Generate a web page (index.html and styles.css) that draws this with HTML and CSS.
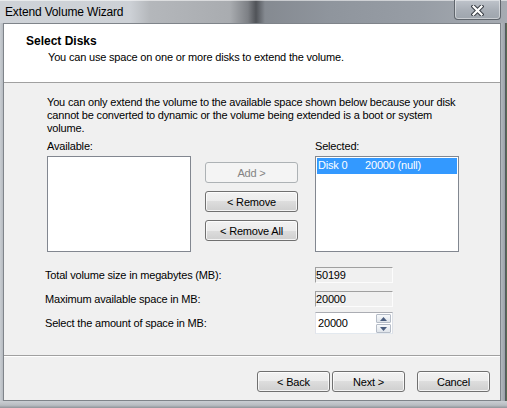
FILE: index.html
```html
<!DOCTYPE html>
<html>
<head>
<meta charset="utf-8">
<title>Extend Volume Wizard</title>
<link rel="stylesheet" href="styles.css">
</head>
<body>
<div class="window">
  <div class="titlebar">
    <span class="title">Extend Volume Wizard</span>
    <div class="close">
      <svg width="13" height="11" viewBox="0 0 13 11">
        <path d="M2.5 1.5 L10.5 9.5 M10.5 1.5 L2.5 9.5" stroke="#3a3f46" stroke-width="4.2" stroke-linecap="square" fill="none"/>
        <path d="M2.5 1.5 L10.5 9.5 M10.5 1.5 L2.5 9.5" stroke="#ffffff" stroke-width="2.2" stroke-linecap="square" fill="none"/>
      </svg>
    </div>
  </div>
  <div class="frame-mid">
    <div class="frame-left"></div>
    <div class="client">
      <div class="header">
        <div class="h-title">Select Disks</div>
        <div class="h-sub">You can use space on one or more disks to extend the volume.</div>
      </div>
      <div class="content">
        <p class="note">You can only extend the volume to the available space shown below because your disk<br>cannot be converted to dynamic or the volume being extended is a boot or system<br>volume.</p>
        <div class="lists">
          <div class="col-list">
            <div class="lbl">Available:</div>
            <div class="listbox"></div>
          </div>
          <div class="col-btns">
            <button class="btn disabled">Add &gt;</button>
            <button class="btn">&lt; Remove</button>
            <button class="btn">&lt; Remove All</button>
          </div>
          <div class="col-list col-sel">
            <div class="lbl">Selected:</div>
            <div class="listbox">
              <div class="item selected"><span class="c1">Disk 0</span><span class="c2">20000 (null)</span></div>
            </div>
          </div>
        </div>
        <div class="fields">
          <div class="flabel">Total volume size in megabytes (MB):</div>
          <div class="rofield">50199</div>
          <div class="flabel">Maximum available space in MB:</div>
          <div class="rofield">20000</div>
          <div class="flabel">Select the amount of space in MB:</div>
          <div class="spin">
            <span class="spin-val">20000</span>
            <div class="spin-btns">
              <div class="sbtn"><svg width="7" height="4" viewBox="0 0 7 4"><path d="M0 4 L3.5 0 L7 4 Z" fill="#4a5d7e"/></svg></div>
              <div class="sbtn"><svg width="7" height="4" viewBox="0 0 7 4"><path d="M0 0 L3.5 4 L7 0 Z" fill="#4a5d7e"/></svg></div>
            </div>
          </div>
        </div>
      </div>
      <div class="footer">
        <button class="btn wbtn">&lt; Back</button>
        <button class="btn wbtn next">Next &gt;</button>
        <button class="btn wbtn cancel">Cancel</button>
      </div>
    </div>
    <div class="frame-right"></div>
  </div>
  <div class="frame-bottom"></div>
</div>
</body>
</html>
```
FILE: styles.css
```css
* { box-sizing: border-box; }
html, body { margin: 0; padding: 0; }
body {
  width: 507px;
  height: 408px;
  overflow: hidden;
  font-family: "Liberation Sans", Arial, sans-serif;
  font-size: 11px;
  letter-spacing: -0.18px;
  color: #000;
  background: #a9aeb4;
}
.window {
  width: 507px;
  height: 408px;
  display: flex;
  flex-direction: column;
}
.titlebar {
  height: 23px;
  flex: none;
  display: flex;
  justify-content: space-between;
  align-items: flex-start;
  background: linear-gradient(to right, #cfd3d8 0px, #cdd1d6 130px, #b4b7bb 150px, #a9acb0 230px, #7d8085 248px, #505358 256px, #858a91 265px, #8f959d 330px, #979da5 420px, #a6abb2 507px);
  box-shadow: inset 0 1px 0 rgba(255,255,255,0.55);
}
.title {
  font-size: 12px;
  letter-spacing: -0.15px;
  line-height: 23px;
  padding: 1px 0 0 5px;
  color: #000;
}
.close {
  width: 47px;
  height: 20px;
  margin-right: 6px;
  border: 1px solid #5f656c;
  border-top: none;
  border-radius: 0 0 4px 4px;
  background: linear-gradient(#bfc4cb, #a8aeb6 55%, #9ea5ad);
  box-shadow: inset 0 0 0 1px rgba(255,255,255,0.45);
  display: flex;
  align-items: center;
  justify-content: center;
}
.close svg { display: block; margin-top: 1px; }
.frame-mid {
  display: flex;
  height: 378px;
  flex: none;
}
.frame-left {
  width: 3px;
  background: linear-gradient(to right, #c9cdd2, #b6bbc1);
}
.frame-right {
  width: 6px;
  background: linear-gradient(to right, #b3b8be 0, #9da3aa 60%, #3d4147 80%, #6e8a5a 100%);
}
.frame-bottom {
  flex: 1;
  background: linear-gradient(#c9cdd2 0, #b9bdc2 60%, #8e9399 100%);
}
.client {
  width: 498px;
  height: 378px;
  border: 1px solid #7f848a;
  background: #f0f0f0;
  display: flex;
  flex-direction: column;
}
.header {
  height: 59px;
  flex: none;
  background: #fff;
  border-bottom: 1px solid #a0a0a0;
  padding: 10px 0 0 22px;
}
.h-title {
  font-size: 12px;
  font-weight: bold;
  letter-spacing: 0;
  line-height: 15px;
}
.h-sub {
  line-height: 13px;
  margin: 2px 0 0 22px;
}
.content {
  padding: 13px 0 0 43px;
}
.note {
  margin: 0;
  line-height: 13px;
}
.lists {
  display: flex;
  margin-top: 5px;
}
.col-list { width: 144px; }
.lbl {
  line-height: 13px;
  margin-bottom: 3px;
}
.listbox {
  height: 96px;
  border: 1px solid #828790;
  background: #fff;
  padding: 1px;
}
.col-btns {
  width: 93px;
  margin-left: 14px;
  padding-top: 22px;
  display: flex;
  flex-direction: column;
  gap: 8px;
}
.col-sel { margin-left: 17px; }
.btn {
  height: 21px;
  width: 93px;
  margin: 0;
  padding: 0;
  font: inherit;
  letter-spacing: inherit;
  color: #000;
  text-align: center;
  border: 1px solid #707070;
  border-radius: 3px;
  background: linear-gradient(#f2f2f2 0%, #ebebeb 50%, #dddddd 50%, #cfcfcf 100%);
  box-shadow: inset 0 0 0 1px rgba(255,255,255,0.75);
}
.btn.disabled {
  border-color: #adb2b5;
  background: #f4f4f4;
  color: #838383;
  box-shadow: none;
}
.item {
  height: 16px;
  line-height: 14px;
  padding-left: 1px;
  display: flex;
}
.item.selected {
  background: #3399ff;
  color: #fff;
}
.c1 { width: 47px; }
.fields {
  display: grid;
  grid-template-columns: 270px 78px;
  margin: 15px 0 0 -2px;
  align-items: center;
}
.flabel { line-height: 13px; }
.rofield {
  height: 16px;
  line-height: 14px;
  padding-left: 0;
  border-top: 1px solid #a0a0a0;
  border-left: 1px solid #a0a0a0;
  border-bottom: 1px solid #fcfcfc;
  border-right: 1px solid #fcfcfc;
  background: #f0f0f0;
}
.rofield + .flabel { margin-top: 8px; }
.fields > :nth-child(4) { margin-top: 8px; }
.fields > :nth-child(5) { margin-top: 5px; }
.spin {
  margin-top: 5px;
  height: 22px;
  border: 1px solid #abadb3;
  border-bottom-color: #e3e9ef;
  border-right-color: #dbdfe6;
  border-left-color: #e2e3ea;
  border-top-color: #abadb3;
  background: #fff;
  display: flex;
  justify-content: space-between;
  align-items: flex-start;
  padding: 1px 1px 0 2px;
}
.spin-val { line-height: 18px; }
.spin-btns {
  display: flex;
  flex-direction: column;
  gap: 1px;
}
.sbtn {
  width: 15px;
  height: 9px;
  border: 1px solid #b5bcc7;
  border-radius: 1px;
  background: linear-gradient(#f7f9fb, #dfe4ea);
  display: flex;
  align-items: center;
  justify-content: center;
}
.sbtn svg { display: block; }
.footer {
  margin-top: auto;
  height: 45px;
  flex: none;
  border-top: 1px solid #a0a0a0;
  box-shadow: inset 0 1px 0 #fff;
  display: flex;
  justify-content: flex-end;
  padding: 15px 10px 0 0;
}
.wbtn { width: 73px; }
.next { margin-left: 2px; }
.cancel { margin-left: 12px; }
```
